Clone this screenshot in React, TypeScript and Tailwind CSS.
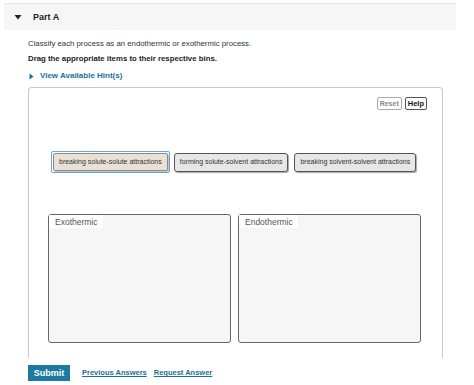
export default function App() {
  const font = { fontFamily: '"Liberation Sans", Arial, Helvetica, sans-serif' };
  return (
    <div className="w-[474px] h-[385px] bg-white overflow-hidden relative" style={font}>
      <div className="h-[3px]" />
      <div className="ml-[4px] w-[452px] border-t border-[#e6e6e6] bg-[#f6f6f6] h-[27px] flex items-center">
        <svg width="8" height="6" viewBox="0 0 8 6" className="ml-[10px]">
          <polygon points="0.5,1 7.5,1 4,5.5" fill="#222" />
        </svg>
        <span className="ml-[11px] text-[9px] font-bold text-[#222] leading-none">Part A</span>
      </div>
      <div className="pl-[28px]">
        <div className="mt-[9px] text-[7.8px] leading-[10px] text-[#333]">Classify each process as an endothermic or exothermic process.</div>
        <div className="mt-[5px] text-[7.8px] leading-[10px] font-bold text-[#222]">Drag the appropriate items to their respective bins.</div>
        <div className="mt-[7px] flex items-center">
          <svg width="5" height="7" viewBox="0 0 5 7" className="ml-[1px]">
            <polygon points="0.5,0.5 4.5,3.5 0.5,6.5" fill="#1b6f98" />
          </svg>
          <span className="ml-[6px] text-[8px] leading-[10px] font-bold text-[#1b6f98]">View Available Hint(s)</span>
        </div>
        <div className="mt-[6px] w-[415px] h-[271px] border border-b-0 border-[#c8c8c8] rounded-t-[4px] flex flex-col">
          <div className="flex justify-end gap-[3px] pr-[15px] pt-[9px]">
            <div className="h-[13px] px-[2px] border border-[#aaa] rounded-[2px] text-[7px] leading-[11px] text-[#888] font-bold">Reset</div>
            <div className="h-[13px] px-[2px] border border-[#555] rounded-[2px] text-[7.5px] leading-[11px] text-[#111] font-bold">Help</div>
          </div>
          <div className="mt-[41px] ml-[22px] flex items-center">
            <div className="p-[1px] border border-[#6fa3dc] rounded-[2px]">
              <div className="h-[18px] px-[5px] border border-[#8a8a8a] bg-[#e9e1d6] rounded-[2px] text-[7px] leading-[16px] text-[#333] shadow-[1px_1px_1px_rgba(0,0,0,0.25)]">breaking solute-solute attractions</div>
            </div>
            <div className="ml-[4px] h-[19px] px-[5px] border-[1.5px] border-[#555] bg-[#e6e6e8] rounded-[3px] text-[7px] leading-[16px] text-[#333] shadow-[1px_1px_1px_rgba(0,0,0,0.35)]">forming solute-solvent attractions</div>
            <div className="ml-[6px] h-[19px] px-[5px] border-[1.5px] border-[#555] bg-[#e6e6e8] rounded-[3px] text-[7px] leading-[16px] text-[#333] shadow-[1px_1px_1px_rgba(0,0,0,0.35)]">breaking solvent-solvent attractions</div>
          </div>
          <div className="mt-[41px] ml-[19px] flex gap-[7px]">
            <div className="w-[183px] h-[129px] border-[1.5px] border-[#666] rounded-[3px] bg-[#f6f6f6] flex flex-col items-start">
              <div className="bg-white pl-[6px] pr-[5px] pt-[2px] h-[13px] text-[8.5px] leading-[11px] text-[#555]">Exothermic</div>
            </div>
            <div className="w-[183px] h-[129px] border-[1.5px] border-[#666] rounded-[3px] bg-[#f6f6f6] flex flex-col items-start">
              <div className="bg-white pl-[6px] pr-[5px] pt-[2px] h-[13px] text-[8.5px] leading-[11px] text-[#555]">Endothermic</div>
            </div>
          </div>
        </div>
        <div className="mt-[7px] flex items-center">
          <div className="w-[42px] h-[16px] bg-[#1b7aa0] text-white text-[9px] leading-[16px] font-bold text-center">Submit</div>
          <span className="ml-[12px] text-[7.5px] font-bold text-[#1b6f98] underline">Previous Answers</span>
          <span className="ml-[7px] text-[7.5px] font-bold text-[#1b6f98] underline">Request Answer</span>
        </div>
      </div>
    </div>
  );
}
